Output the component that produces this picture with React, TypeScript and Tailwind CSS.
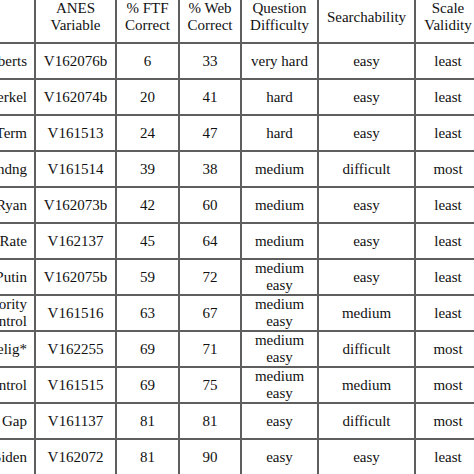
import React from "react";

type Row = { name: string[]; anes: string; ftf: string; web: string; diff: string[]; search: string; valid: string };

const rows: Row[] = [
  { name: ["Roberts"], anes: "V162076b", ftf: "6", web: "33", diff: ["very hard"], search: "easy", valid: "least" },
  { name: ["Merkel"], anes: "V162074b", ftf: "20", web: "41", diff: ["hard"], search: "easy", valid: "least" },
  { name: ["Term"], anes: "V161513", ftf: "24", web: "47", diff: ["hard"], search: "easy", valid: "least" },
  { name: ["Spndng"], anes: "V161514", ftf: "39", web: "38", diff: ["medium"], search: "difficult", valid: "most" },
  { name: ["Ryan"], anes: "V162073b", ftf: "42", web: "60", diff: ["medium"], search: "easy", valid: "least" },
  { name: ["Rate"], anes: "V162137", ftf: "45", web: "64", diff: ["medium"], search: "easy", valid: "least" },
  { name: ["Putin"], anes: "V162075b", ftf: "59", web: "72", diff: ["medium", "easy"], search: "easy", valid: "least" },
  { name: ["Authority", "Control"], anes: "V161516", ftf: "63", web: "67", diff: ["medium", "easy"], search: "medium", valid: "least" },
  { name: ["Relig*"], anes: "V162255", ftf: "69", web: "71", diff: ["medium", "easy"], search: "difficult", valid: "most" },
  { name: ["Control"], anes: "V161515", ftf: "69", web: "75", diff: ["medium", "easy"], search: "medium", valid: "most" },
  { name: ["Income Gap"], anes: "V161137", ftf: "81", web: "81", diff: ["easy"], search: "difficult", valid: "most" },
  { name: ["Biden"], anes: "V162072", ftf: "81", web: "90", diff: ["easy"], search: "easy", valid: "least" },
];

const cell = "border-r-2 border-b-2 border-[#5e5e5e] flex flex-col items-center justify-center text-center whitespace-nowrap overflow-hidden";
const head = "border-r-2 border-b-2 border-[#5e5e5e] flex flex-col items-center justify-center text-center whitespace-nowrap overflow-hidden h-[44px] pb-[8px]";

function Lines({ lines }: { lines: string[] }) {
  return (
    <>
      {lines.map((l, i) => (
        <span key={i} className="block">{l}</span>
      ))}
    </>
  );
}

export default function App() {
  return (
    <div className="w-[474px] h-[474px] overflow-hidden bg-white font-['Liberation_Serif',serif] text-[15px] leading-[17px] text-[#111111]">
      <div className="grid w-[482px] grid-cols-[36px_81px_63px_62px_77px_97px_66px]">
        <div className={head}></div>
        <div className={head}><Lines lines={["ANES", "Variable"]} /></div>
        <div className={head}><Lines lines={["% FTF", "Correct"]} /></div>
        <div className={head}><Lines lines={["% Web", "Correct"]} /></div>
        <div className={head}><Lines lines={["Question", "Difficulty"]} /></div>
        <div className={head}><Lines lines={["Searchability"]} /></div>
        <div className={head}><Lines lines={["Scale", "Validity"]} /></div>
        {rows.map((r, i) => (
          <React.Fragment key={i}>
            <div className="border-r-2 border-b-2 border-[#5e5e5e] h-[36px] flex flex-col items-end justify-center whitespace-nowrap overflow-hidden pr-[7px]">
              <Lines lines={r.name} />
            </div>
            <div className={cell + " h-[36px]"}>{r.anes}</div>
            <div className={cell + " h-[36px]"}>{r.ftf}</div>
            <div className={cell + " h-[36px]"}>{r.web}</div>
            <div className={cell + " h-[36px]"}><Lines lines={r.diff} /></div>
            <div className={cell + " h-[36px]"}>{r.search}</div>
            <div className={cell + " h-[36px]"}>{r.valid}</div>
          </React.Fragment>
        ))}
      </div>
    </div>
  );
}
